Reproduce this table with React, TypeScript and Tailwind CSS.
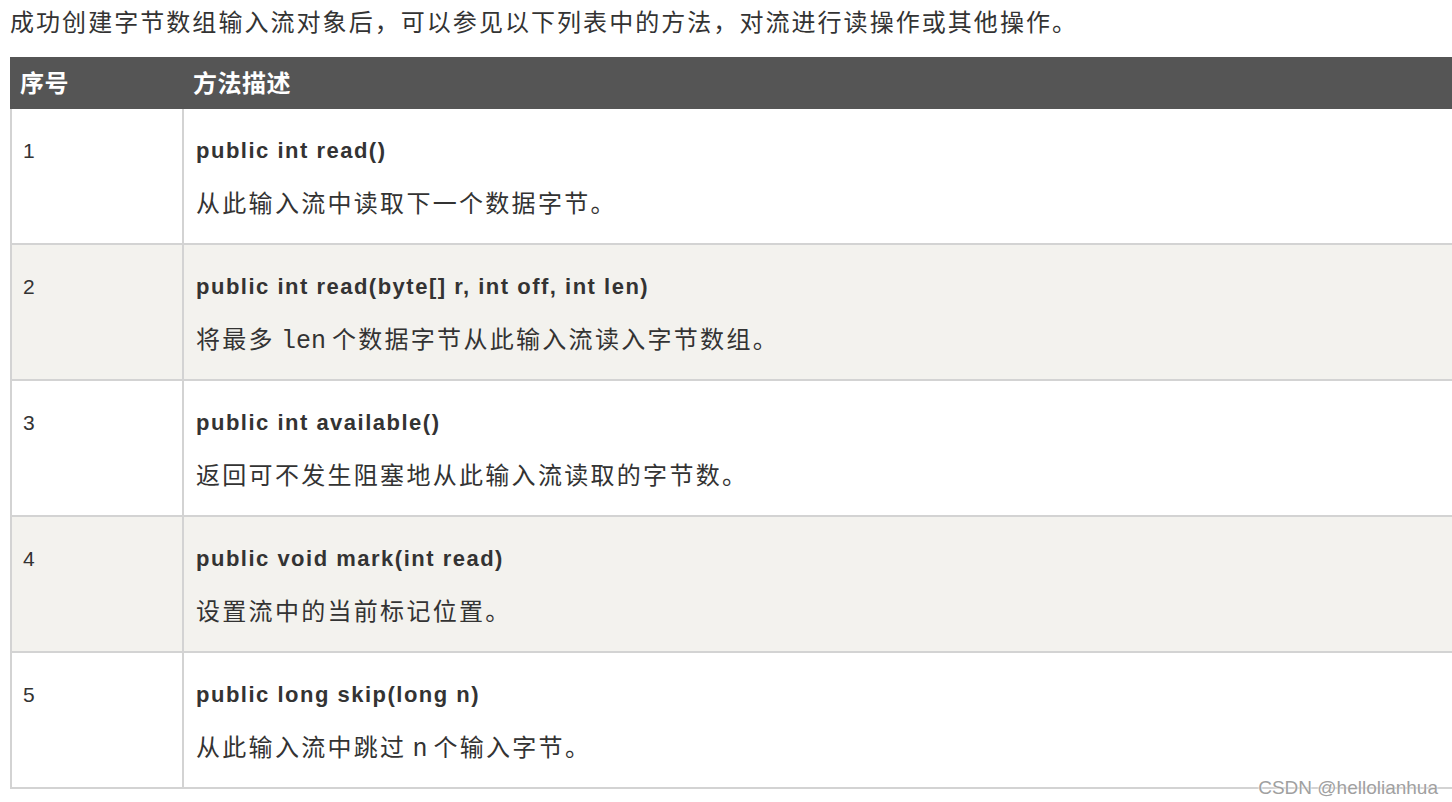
import React from 'react';

interface Method {
  no: string;
  signature: string;
  desc: React.ReactNode;
}

const Code: React.FC<{ children: React.ReactNode }> = ({ children }) => (
  <code className="mx-[6px] font-['Liberation_Mono',monospace] text-[25px] tracking-normal">{children}</code>
);

const methods: Method[] = [
  { no: '1', signature: 'public int read()', desc: '从此输入流中读取下一个数据字节。' },
  {
    no: '2',
    signature: 'public int read(byte[] r, int off, int len)',
    desc: (
      <>
        将最多<Code>len</Code>个数据字节从此输入流读入字节数组。
      </>
    ),
  },
  { no: '3', signature: 'public int available()', desc: '返回可不发生阻塞地从此输入流读取的字节数。' },
  { no: '4', signature: 'public void mark(int read)', desc: '设置流中的当前标记位置。' },
  {
    no: '5',
    signature: 'public long skip(long n)',
    desc: (
      <>
        从此输入流中跳过<Code>n</Code>个输入字节。
      </>
    ),
  },
];

const App: React.FC = () => {
  return (
    <div className="relative h-[802px] w-[1452px] overflow-hidden bg-white font-['Liberation_Sans','Noto_Sans_CJK_SC',sans-serif] text-[#333333]">
      <div className="h-[57px] pl-[10px] pt-[8px]">
        <p className="text-[24px] leading-[30px] tracking-[2.05px]">
          成功创建字节数组输入流对象后，可以参见以下列表中的方法，对流进行读操作或其他操作。
        </p>
      </div>

      <div className="ml-[10px] w-[1460px]">
        <div className="flex h-[52px] items-center bg-[#555555] text-white">
          <div className="w-[174px] pl-[10px] pt-[2px] text-[24px] font-bold tracking-[0.5px]">序号</div>
          <div className="pl-[9px] pt-[2px] text-[24px] font-bold tracking-[0.5px]">方法描述</div>
        </div>

        {methods.map((m, i) => (
          <div
            key={m.no}
            className={
              i % 2 === 1
                ? 'flex h-[136px] border-b-2 border-l-2 border-[#d3d3d3] bg-[#f3f2ee]'
                : 'flex h-[136px] border-b-2 border-l-2 border-[#d3d3d3] bg-white'
            }
          >
            <div className="w-[172px] shrink-0 border-r-2 border-[#d3d3d3] pl-[11px] pt-[29px] text-[21px] leading-[26px]">
              {m.no}
            </div>
            <div className="pl-[12px] pt-[28px]">
              <div className="text-[22px] font-bold leading-[28px] tracking-[1.5px]">{m.signature}</div>
              <div className="mt-[23px] text-[24px] leading-[32px] tracking-[2.3px]">{m.desc}</div>
            </div>
          </div>
        ))}
      </div>

      <div className="absolute bottom-[3px] right-[14px] text-[19px] leading-[22px] text-[#a0a0a0] [text-shadow:0_0_2px_#ffffff,0_0_2px_#ffffff]">
        CSDN @hellolianhua
      </div>
    </div>
  );
};

export default App;
